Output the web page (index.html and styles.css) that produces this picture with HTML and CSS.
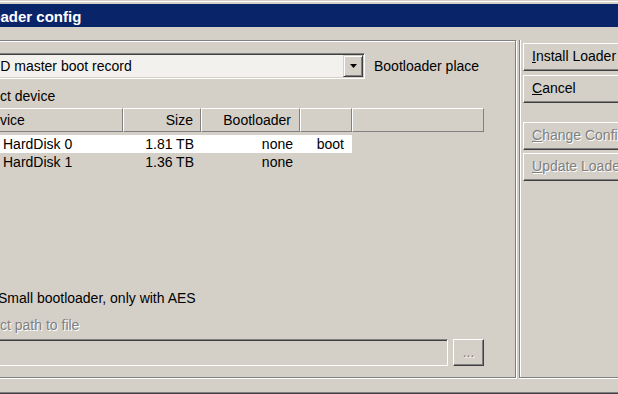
FILE: index.html
```html
<!DOCTYPE html>
<html>
<head>
<meta charset="utf-8">
<title>Bootloader config</title>
<link rel="stylesheet" href="styles.css">
</head>
<body>
<div class="window">
  <div class="frame-top"></div>
  <div class="caption"><span class="caption-text">Bootloader config</span></div>
  <div class="client">
    <div class="group group-left">
      <div class="top-row">
        <div class="combo">
          <span class="combo-text">HDD master boot record</span>
          <span class="combo-btn"><svg width="7" height="4" viewBox="0 0 7 4"><polygon points="0,0 7,0 3.5,4" fill="#000"/></svg></span>
        </div>
        <span class="place-label">Bootloader place</span>
      </div>
      <div class="text-label sel-label">Select device</div>
      <div class="list">
        <div class="header">
          <div class="hcell c0">Device</div>
          <div class="hcell c1 right">Size</div>
          <div class="hcell c2 right">Bootloader</div>
          <div class="hcell c3"></div>
          <div class="hcell filler"></div>
        </div>
        <div class="rows">
          <div class="lrow selected">
            <span class="cell c0 name">HardDisk 0</span>
            <span class="cell c1 right">1.81 TB</span>
            <span class="cell c2 right">none</span>
            <span class="cell c3 right">boot</span>
          </div>
          <div class="lrow">
            <span class="cell c0 name">HardDisk 1</span>
            <span class="cell c1 right">1.36 TB</span>
            <span class="cell c2 right">none</span>
            <span class="cell c3 right"></span>
          </div>
        </div>
      </div>
      <div class="check-row">
        <span class="checkbox"></span>
        <span>Small bootloader, only with AES</span>
      </div>
      <div class="text-label path-label disabled">Select path to file</div>
      <div class="path-row">
        <div class="edit"></div>
        <div class="btn dots-btn disabled">...</div>
      </div>
    </div>
    <div class="group group-right">
      <div class="btn action install"><u>I</u>nstall Loader</div>
      <div class="btn action cancel"><u>C</u>ancel</div>
      <div class="btn action change disabled"><u>C</u>hange Config</div>
      <div class="btn action update disabled"><u>U</u>pdate Loader</div>
    </div>
  </div>
  <div class="frame-bottom"></div>
</div>
</body>
</html>
```

FILE: styles.css
```css
html, body {
  margin: 0;
  padding: 0;
}

body {
  width: 618px;
  height: 394px;
  overflow: hidden;
  background: #d4d0c8;
  font-family: "Liberation Sans", Arial, sans-serif;
  font-size: 14px;
  color: #000;
}

.window {
  width: 618px;
  height: 394px;
  display: flex;
  flex-direction: column;
  overflow: hidden;
}

.frame-top {
  flex: none;
  height: 4px;
  background: linear-gradient(#d4d0c8 0 1px, #ffffff 1px 2px, #d4d0c8 2px 4px);
}

.caption {
  flex: none;
  box-sizing: border-box;
  height: 23px;
  padding-top: 2px;
  line-height: 21px;
  background: #0a246a;
  color: #fff;
  font-weight: bold;
  font-size: 15px;
  white-space: nowrap;
  overflow: hidden;
}

.caption-text {
  display: inline-block;
  margin-left: -47px;
}

.client {
  flex: none;
  box-sizing: border-box;
  height: 365px;
  padding-top: 13px;
  display: flex;
}

.group {
  flex: none;
  box-sizing: border-box;
  height: 338px;
}

.group-left {
  width: 556px;
  margin-left: -40px;
  border: 1px solid #808080;
  box-shadow: 1px 1px 0 #fff, inset 1px 1px 0 #fff;
  padding: 12px 0 0 11px;
}

.group-right {
  width: 200px;
  margin-left: 3px;
  border-left: 1px solid #808080;
  border-bottom: 1px solid #808080;
  box-shadow: inset 1px 0 0 #fff, 0 1px 0 #fff;
  padding: 3px 0 0 3px;
}

.top-row {
  display: flex;
  align-items: center;
  height: 26px;
}

.combo {
  flex: none;
  box-sizing: border-box;
  width: 393px;
  height: 26px;
  padding: 1px;
  display: flex;
  border: 1px solid;
  border-color: #808080 #fff #fff #808080;
  box-shadow: inset 1px 1px 0 #404040, inset -1px -1px 0 #d4d0c8;
  background: #f3f1ee;
}

.combo-text {
  flex: 1;
  padding-left: 6px;
  line-height: 22px;
  white-space: nowrap;
  overflow: hidden;
}

.combo-btn {
  flex: none;
  box-sizing: border-box;
  width: 20px;
  border: 1px solid;
  border-color: #d4d0c8 #404040 #404040 #d4d0c8;
  box-shadow: inset 1px 1px 0 #fff, inset -1px -1px 0 #808080;
  background: #d4d0c8;
  display: flex;
  align-items: center;
  justify-content: center;
}

.combo-btn svg {
  display: block;
}

.place-label {
  margin-left: 9px;
  white-space: nowrap;
}

.text-label {
  line-height: 16px;
  white-space: nowrap;
}

.sel-label {
  margin-top: 9px;
}

.list {
  margin-top: 4px;
  width: 512px;
  height: 174px;
}

.header {
  display: flex;
  height: 24px;
}

.hcell {
  flex: none;
  box-sizing: border-box;
  height: 24px;
  border-top: 1px solid #fff;
  border-left: 1px solid #fff;
  border-right: 1px solid #808080;
  border-bottom: 1px solid #808080;
  line-height: 22px;
  white-space: nowrap;
  overflow: hidden;
}

.hcell.c0 {
  padding-left: 9px;
}

.hcell.c1 {
  padding-right: 7px;
}

.hcell.c2 {
  padding-right: 8px;
}

.c0 { width: 151px; }
.c1 { width: 78px; }
.c2 { width: 99px; }
.c3 { width: 52px; }
.filler { width: 132px; }

.right {
  text-align: right;
}

.rows {
  padding-top: 3px;
}

.lrow {
  display: flex;
  width: 380px;
  height: 18px;
  line-height: 18px;
}

.lrow.selected {
  background: #fff;
}

.cell {
  flex: none;
  box-sizing: border-box;
  white-space: nowrap;
  overflow: hidden;
}

.cell.right {
  padding-right: 7px;
}

.cell.c3.right {
  padding-right: 8px;
}

.cell.name {
  padding-left: 31px;
}

.check-row {
  margin-top: 7px;
  height: 18px;
  display: flex;
  align-items: center;
  white-space: nowrap;
}

.checkbox {
  flex: none;
  box-sizing: border-box;
  width: 16px;
  height: 16px;
  margin-right: 10px;
  border: 1px solid;
  border-color: #808080 #fff #fff #808080;
  box-shadow: inset 1px 1px 0 #404040, inset -1px -1px 0 #d4d0c8;
  background: #fff;
}

.path-label {
  margin-top: 10px;
}

.disabled {
  color: #808080;
  text-shadow: 1px 1px 0 #fff;
}

.path-row {
  margin-top: 6px;
  display: flex;
  height: 27px;
}

.edit {
  flex: none;
  box-sizing: border-box;
  width: 476px;
  height: 27px;
  border: 1px solid;
  border-color: #808080 #fff #fff #808080;
  box-shadow: inset 1px 1px 0 #404040, inset -1px -1px 0 #d4d0c8;
  background: #d4d0c8;
}

.btn {
  box-sizing: border-box;
  border: 1px solid;
  border-color: #fff #404040 #404040 #fff;
  box-shadow: inset -1px -1px 0 #808080;
  background: #d4d0c8;
  white-space: nowrap;
  overflow: hidden;
}

.dots-btn {
  flex: none;
  width: 31px;
  height: 27px;
  margin-left: 5px;
  text-align: center;
  line-height: 24px;
}

.action {
  width: 140px;
  height: 28px;
  padding-left: 8px;
  line-height: 25px;
}

.cancel {
  margin-top: 4px;
}

.change {
  margin-top: 19px;
}

.update {
  margin-top: 3px;
}

.frame-bottom {
  flex: none;
  height: 2px;
  background: linear-gradient(#808080 0 1px, #404040 1px 2px);
}
```
